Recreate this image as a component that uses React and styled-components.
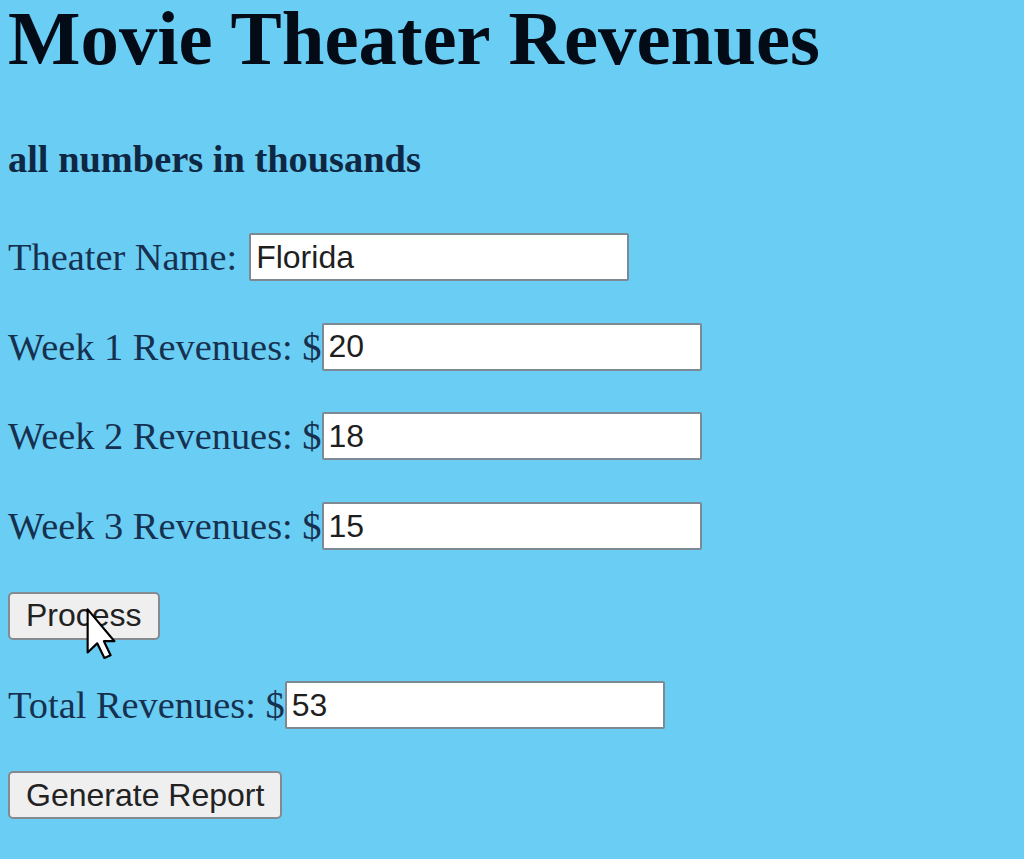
import styled, { createGlobalStyle } from 'styled-components'

const GlobalStyle = createGlobalStyle`
    html, body {
        margin: 0;
        padding: 0;
        background-color: #6acdf4;
    }
    body {
        font-family: "Liberation Serif", "Times New Roman", serif;
    }
`

const Page = styled.div`
    width: 1024px;
    height: 859px;
    padding-left: 8px;
    box-sizing: border-box;
    overflow: hidden;
    background-color: #6acdf4;
`

const Title = styled.h1`
    margin: 0;
    font-size: 76.8px;
    line-height: 78px;
    font-weight: bold;
    color: #030b16;
`

const Subtitle = styled.h4`
    margin: 57px 0 0 0;
    font-size: 38.4px;
    line-height: 48px;
    font-weight: bold;
    color: #0e2743;
`

const Form = styled.div`
    display: flex;
    flex-direction: column;
    gap: 41.7px;
    margin-top: 50px;
`

const Row = styled.div`
    display: flex;
    align-items: center;
    height: 48px;
    position: relative;
`

const Label = styled.span`
    font-size: 38.4px;
    line-height: 48px;
    color: #16314f;
    white-space: pre;
    margin-right: ${(p) => (p.$spaced ? '12px' : '0')};
`

const Field = styled.input`
    box-sizing: border-box;
    width: 380px;
    height: 48px;
    padding: 0 5px;
    border: 2px solid #7d8a93;
    border-radius: 2px;
    background: #fff;
    font-family: "Liberation Sans", Arial, sans-serif;
    font-size: 32px;
    color: #1f1f1f;
    outline: none;
`

const Button = styled.button`
    box-sizing: border-box;
    height: 48px;
    padding: 0 16px;
    border: 2px solid #848a90;
    border-radius: 5px;
    background: #efefef;
    font-family: "Liberation Sans", Arial, sans-serif;
    font-size: 32px;
    color: #222;
    cursor: pointer;
`

const Cursor = styled.svg`
    position: absolute;
    left: 77px;
    top: 15px;
    pointer-events: none;
`

function Pointer() {
    return (
        <Cursor width="34" height="55" viewBox="0 0 14 23">
            <path d="M1 1 L1 19 L5 15.2 L8 21.3 L10.6 20.2 L7.8 14.3 L12.2 14.3 Z" fill="#fff" stroke="#000" strokeWidth="0.9" strokeLinejoin="round" />
        </Cursor>
    )
}

const weeks = [
    { label: 'Week 1 Revenues: $', value: '20' },
    { label: 'Week 2 Revenues: $', value: '18' },
    { label: 'Week 3 Revenues: $', value: '15' },
]

function App() {
    return (
        <Page>
            <GlobalStyle />
            <Title>Movie Theater Revenues</Title>
            <Subtitle>all numbers in thousands</Subtitle>
            <Form>
                <Row>
                    <Label $spaced>Theater Name:</Label>
                    <Field defaultValue="Florida" />
                </Row>
                {weeks.map((w) => (
                    <Row key={w.label}>
                        <Label>{w.label}</Label>
                        <Field defaultValue={w.value} />
                    </Row>
                ))}
                <Row>
                    <Button>Process</Button>
                    <Pointer />
                </Row>
                <Row>
                    <Label>Total Revenues: $</Label>
                    <Field defaultValue="53" />
                </Row>
                <Row>
                    <Button>Generate Report</Button>
                </Row>
            </Form>
        </Page>
    )
}

export default App
